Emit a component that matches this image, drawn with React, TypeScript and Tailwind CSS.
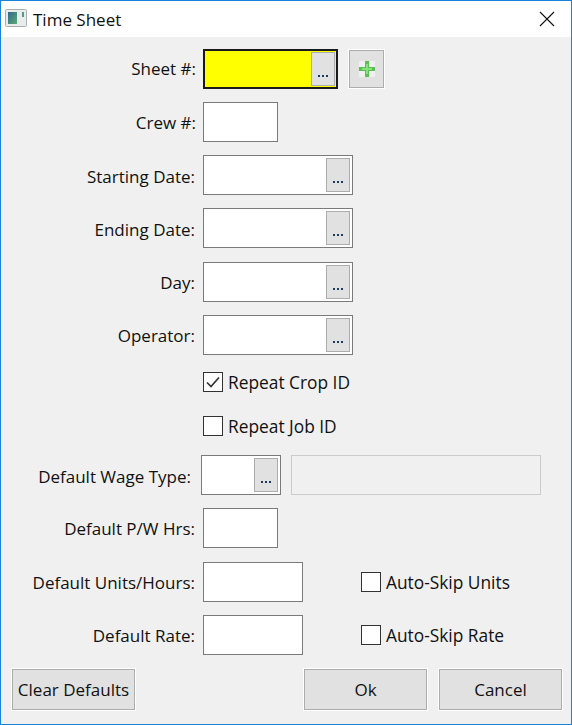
const font = { fontFamily: '"Open Sans", "Noto Sans", sans-serif' }

function Dots() {
  return (
    <button className="w-[24px] h-[34px] bg-[#e1e1e1] border border-[#adadad] flex items-end justify-center pb-[8px] gap-[2px] shrink-0">
      <span className="w-[2px] h-[2px] bg-[#1a3a6a]" />
      <span className="w-[2px] h-[2px] bg-[#1a3a6a]" />
      <span className="w-[2px] h-[2px] bg-[#1a3a6a]" />
    </button>
  )
}

function Label({ text, w = 'w-[194px]', pt = 'pt-[2px]' }: { text: string; w?: string; pt?: string }) {
  return <div className={`${w} ${pt} text-[17px] text-right shrink-0 whitespace-nowrap`}>{text}</div>
}

function Lookup({ w }: { w: string }) {
  return (
    <div className={`${w} h-[40px] bg-white border border-[#7a7a7a] flex justify-end items-center pr-[2px]`}>
      <Dots />
    </div>
  )
}

function Plain({ w }: { w: string }) {
  return <div className={`${w} h-[40px] bg-white border border-[#7a7a7a]`} />
}

function Check({ checked }: { checked?: boolean }) {
  return (
    <div className="w-[20px] h-[20px] bg-white border border-[#333333] flex items-center justify-center shrink-0">
      {checked && (
        <svg width="14" height="12" viewBox="0 0 14 12" fill="none">
          <path d="M1 6.5 L5 10.5 L13 1.5" stroke="#333333" strokeWidth="1.7" />
        </svg>
      )}
    </div>
  )
}

function Btn({ text, w }: { text: string; w: string }) {
  return (
    <button className={`${w} h-[41px] pt-[1px] text-[17px] bg-[#e1e1e1] border border-[#adadad] outline outline-1 outline-white text-center`}>
      {text}
    </button>
  )
}

export default function App() {
  return (
    <div
      className="w-[572px] h-[725px] border border-[#1883d7] bg-[#f0f0f0] text-[17.33px] text-[#111111] overflow-hidden flex flex-col"
      style={font}
    >
      <div className="h-[36px] bg-white flex items-center shrink-0">
        <svg width="22" height="18" viewBox="0 0 22 18" className="ml-[4px] -mt-[3px]">
          <defs>
            <linearGradient id="tile" x1="0" y1="0" x2="1" y2="1">
              <stop offset="0" stopColor="#36668f" />
              <stop offset="1" stopColor="#58ab73" />
            </linearGradient>
          </defs>
          <rect x="0.5" y="0.5" width="21" height="17" rx="1" fill="#e8ecec" stroke="#a9b0b0" />
          <rect x="3" y="3" width="9" height="12" fill="url(#tile)" />
          <rect x="17" y="3" width="2" height="5" fill="#4f9f88" />
        </svg>
        <span className="ml-[6px] pt-[2px] text-[17px]">Time Sheet</span>
        <svg width="16" height="16" viewBox="0 0 16 16" className="ml-auto mr-[16px]" fill="none">
          <path d="M1 1 L15 15 M15 1 L1 15" stroke="#111111" strokeWidth="1.1" />
        </svg>
      </div>

      <div className="flex items-center h-[40px] mt-[12px]">
        <Label text="Sheet #:" w="w-[195px]" pt="pt-0" />
        <div className="ml-[7px] w-[135px] h-[40px] bg-[#ffff00] border-2 border-[#1a1a1a] flex justify-end items-center pr-[1px]">
          <Dots />
        </div>
        <button className="ml-[11px] w-[35px] h-[38px] bg-[#e1e1e1] border border-[#adadad] outline outline-1 outline-white flex items-center justify-center">
          <svg width="16" height="16" viewBox="0 0 16 16">
            <rect width="16" height="16" fill="#f0f0f0" />
            <path d="M6 0h4v6h6v4h-6v6h-4v-6h-6v-4h6z" fill="#58c04f" />
            <path d="M7 3h2v4h4v2h-4v4h-2v-4h-4v-2h4z" fill="#86e07c" />
          </svg>
        </button>
      </div>

      <div className="flex items-center mt-[13px]">
        <Label text="Crew #:" w="w-[195px]" />
        <div className="ml-[7px]"><Plain w="w-[75px]" /></div>
      </div>
      <div className="flex items-center mt-[13px]">
        <Label text="Starting Date:" pt="pt-[4px]" />
        <div className="ml-[8px]"><Lookup w="w-[150px]" /></div>
      </div>
      <div className="flex items-center mt-[13px]">
        <Label text="Ending Date:" pt="pt-[4px]" />
        <div className="ml-[8px]"><Lookup w="w-[150px]" /></div>
      </div>
      <div className="flex items-center mt-[14px]">
        <Label text="Day:" />
        <div className="ml-[8px]"><Lookup w="w-[150px]" /></div>
      </div>
      <div className="flex items-center mt-[13px]">
        <Label text="Operator:" />
        <div className="ml-[8px]"><Lookup w="w-[150px]" /></div>
      </div>

      <div className="flex items-center h-[20px] mt-[17px] ml-[202px] gap-[5px]">
        <Check checked />
        <span className="pt-[2px]">Repeat Crop ID</span>
      </div>
      <div className="flex items-center h-[20px] mt-[24px] ml-[202px] gap-[5px]">
        <Check />
        <span className="pt-[2px]">Repeat Job ID</span>
      </div>

      <div className="flex items-center mt-[19px]">
        <Label text="Default Wage Type:" w="w-[190px]" pt="pt-[4px]" />
        <div className="ml-[10px]"><Lookup w="w-[80px]" /></div>
        <div className="ml-[10px] w-[250px] h-[40px] border border-[#cccccc] bg-[#f0f0f0]" />
      </div>
      <div className="flex items-center mt-[13px]">
        <Label text="Default P/W Hrs:" />
        <div className="ml-[8px]"><Plain w="w-[75px]" /></div>
      </div>
      <div className="flex items-center mt-[14px]">
        <Label text="Default Units/Hours:" />
        <div className="ml-[8px]"><Plain w="w-[100px]" /></div>
        <div className="ml-[58px] flex items-center gap-[5px]">
          <Check />
          <span className="pt-[2px]">Auto-Skip Units</span>
        </div>
      </div>
      <div className="flex items-center mt-[13px]">
        <Label text="Default Rate:" />
        <div className="ml-[8px]"><Plain w="w-[100px]" /></div>
        <div className="ml-[58px] flex items-center gap-[5px]">
          <Check />
          <span className="pt-[2px]">Auto-Skip Rate</span>
        </div>
      </div>

      <div className="flex items-center mt-[14px] ml-[11px]">
        <Btn text="Clear Defaults" w="w-[123px]" />
        <div className="ml-[169px]"><Btn text="Ok" w="w-[123px]" /></div>
        <div className="ml-[12px]"><Btn text="Cancel" w="w-[123px]" /></div>
      </div>
    </div>
  )
}
